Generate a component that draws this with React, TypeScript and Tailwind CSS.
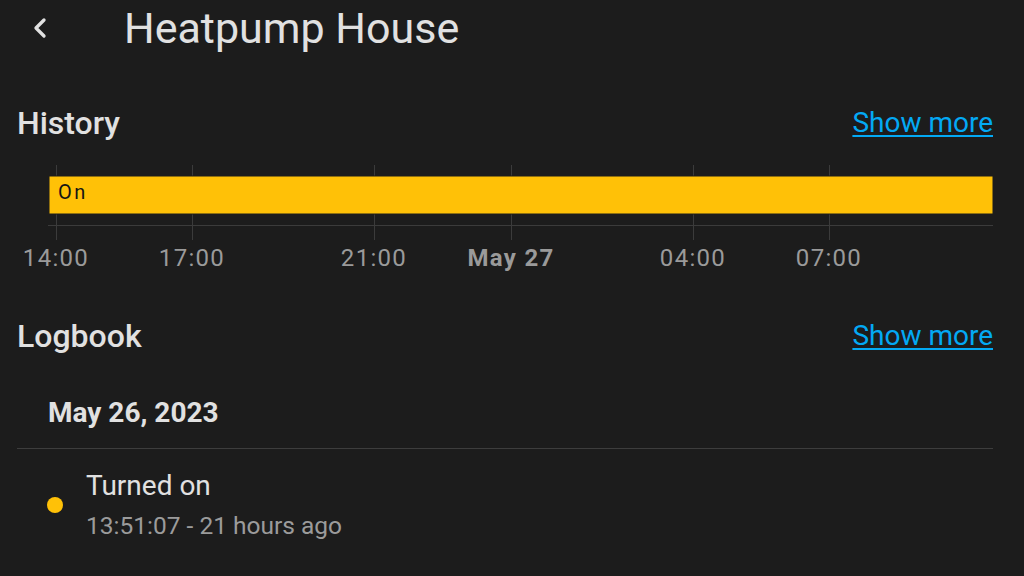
import { ChevronLeft } from 'lucide-react';

const ticks = [
  { x: 56, label: '14:00' },
  { x: 192, label: '17:00' },
  { x: 374, label: '21:00' },
  { x: 511, label: 'May 27', bold: true },
  { x: 693, label: '04:00' },
  { x: 829, label: '07:00' },
];

function HistoryChart() {
  // chart drawn in page coords, svg top sits at y=160
  return (
    <svg width={1024} height={115} className="block" style={{ fontFamily: 'Roboto, sans-serif' }}>
      {ticks.map(t => (
        <line key={t.x} x1={t.x + 0.5} x2={t.x + 0.5} y1={5} y2={80} stroke="#3b3b3b" strokeWidth={1} />
      ))}
      <line x1={48} x2={993} y1={65.5} y2={65.5} stroke="#3b3b3b" strokeWidth={1} />
      <rect x={49} y={16} width={944} height={38} fill="#ffc107" stroke="#1c1c1c" strokeWidth={1} />
      <text x={58} y={39} fontSize={20} fill="#141414" letterSpacing={2.4}>On</text>
      {ticks.map(t => (
        <text
          key={t.label}
          x={t.x}
          y={106}
          textAnchor="middle"
          fontSize={24}
          letterSpacing={1.3}
          fontWeight={t.bold ? 700 : 400}
          fill="#9a9a9a"
        >
          {t.label}
        </text>
      ))}
    </svg>
  );
}

function SectionHead({ title }: { title: string }) {
  return (
    <div className="flex items-center justify-between pl-[17px] pr-[31px]">
      <h2 className="text-[32px] font-medium text-[#e1e1e1] leading-none">{title}</h2>
      <a href="#" className="text-[28px] leading-none text-[#03a9f4] underline underline-offset-[3px] decoration-[2px]">
        Show more
      </a>
    </div>
  );
}

export default function App() {
  return (
    <div className="w-[1024px] h-[576px] overflow-hidden bg-[#1c1c1c] text-[#e1e1e1]" style={{ fontFamily: 'Roboto, sans-serif' }}>
      <header className="flex items-center h-14">
        <button className="w-[48px] ml-[16px] flex items-center justify-center text-[#e1e1e1]">
          <ChevronLeft className="w-8 h-8" strokeWidth={2.5} />
        </button>
        <h1 className="ml-[60px] text-[43px] leading-none">Heatpump House</h1>
      </header>

      <section className="mt-[51px]">
        <SectionHead title="History" />
        <div className="mt-[21px]">
          <HistoryChart />
        </div>
      </section>

      <section className="mt-[45px]">
        <SectionHead title="Logbook" />
        <div className="mt-[47px] ml-[17px] mr-[31px]">
          <div className="pl-[31px] pb-[21px] text-[28px] font-bold leading-none">May 26, 2023</div>
          <div className="border-t border-[#3d3d3d]" />
          <div className="flex items-center pt-[23px]">
            <div className="w-[16px] h-[16px] rounded-full bg-[#ffc107] ml-[30px]" />
            <div className="ml-[23px]">
              <div className="text-[28px] leading-none">Turned on</div>
              <div className="mt-[14px] text-[24.5px] leading-none text-[#9b9b9b]">13:51:07 - 21 hours ago</div>
            </div>
          </div>
        </div>
      </section>
    </div>
  );
}
